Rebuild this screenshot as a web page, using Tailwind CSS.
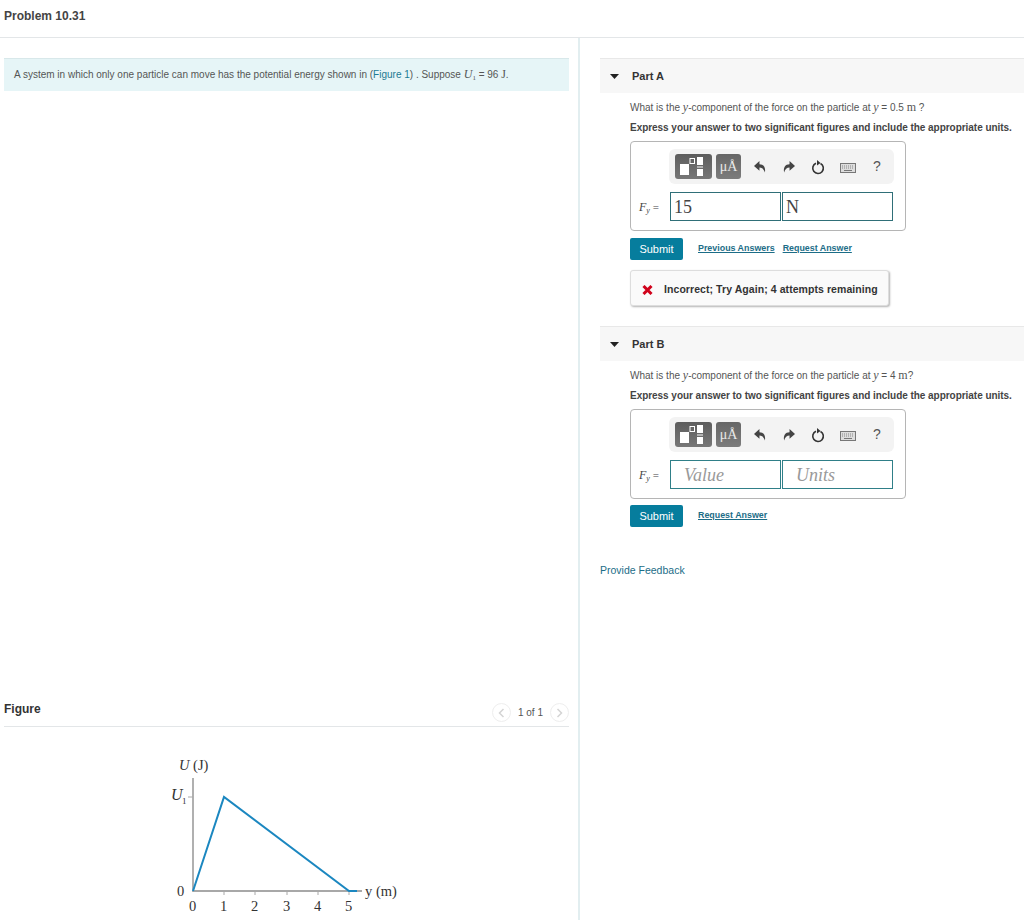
<!DOCTYPE html>
<html lang="en">

<head>
  <title>Problem 10.31</title>
  <meta charset="UTF-8">
  <script src="https://cdn.jsdelivr.net/npm/@tailwindcss/browser@4"></script>
</head>

<body class="bg-white font-['Liberation_Sans',Arial,sans-serif] text-[#333] overflow-hidden">
  <div class="h-[38px] border-b border-[#e3e6e8] pl-[4px] pt-[9px] text-[12px] leading-[15px] font-bold text-[#444]">Problem 10.31</div>

  <div class="flex h-[882px]">
    <!-- left: statement and figure -->
    <div class="w-[580px] shrink-0 border-r-2 border-[#e2eef0] pl-[4px] pr-[9px] pt-[20px]">
      <div class="h-[33px] bg-[#e6f5f7] border-t border-[#d8e8ea] pl-[10px] pb-[2px] flex items-center text-[10px] text-[#555]">
        <span>A system in which only one particle can move has the potential energy shown in (<span class="text-[#1c7a93]">Figure 1</span>) . Suppose <i class="font-['Liberation_Serif',serif] text-[12px]">U</i><sub class="font-['Liberation_Serif',serif] text-[7px]">1</sub> = 96 <span class="font-['Liberation_Serif',serif] text-[12px]">J</span>.</span>
      </div>

      <div class="mt-[609px] h-[27px] border-b border-[#e3e6e8] flex items-start justify-between">
        <span class="mt-[2px] text-[12px] leading-[15px] font-bold text-[#333]">Figure</span>
        <div class="flex items-center gap-[7px] mt-[3px] -ml-[2px] text-[10px] text-[#555]">
          <span class="w-[19px] h-[19px] rounded-full border border-[#eee] flex items-center justify-center">
            <svg width="7" height="10" viewBox="0 0 7 10" fill="none" stroke="#d4d4d4" stroke-width="1.5"><path d="M5.500 1 1.500 5l4 4" /></svg>
          </span>
          <span>1 of 1</span>
          <span class="w-[19px] h-[19px] rounded-full border border-[#eee] flex items-center justify-center">
            <svg width="7" height="10" viewBox="0 0 7 10" fill="none" stroke="#d4d4d4" stroke-width="1.5"><path d="M1.500 1l4 4-4 4" /></svg>
          </span>
        </div>
      </div>

      <svg class="block ml-[146px] mt-[23px]" width="260" height="170" viewBox="0 0 260 170" font-family="Liberation Serif, serif" font-size="14.5" fill="#333">
        <path d="M43 28V141H212" fill="none" stroke="#a8a8a8" stroke-width="1.800" />
        <path d="M38 47h5M74 141v4M105 141v4M137 141v4M168 141v4M199 141v4" fill="none" stroke="#a8a8a8" stroke-width="1" />
        <path d="M43 141 74 47 199 141H207" fill="none" stroke="#1b87c0" stroke-width="2" />
        <text x="29" y="20"><tspan font-style="italic">U</tspan> (J)</text>
        <text x="21" y="50" font-size="16" font-style="italic">U</text>
        <text x="32" y="54" font-size="9">1</text>
        <text x="27" y="146">0</text>
        <text x="215" y="146">y (m)</text>
        <text x="39" y="161">0</text>
        <text x="70" y="161">1</text>
        <text x="101" y="161">2</text>
        <text x="133" y="161">3</text>
        <text x="164" y="161">4</text>
        <text x="195" y="161">5</text>
      </svg>
    </div>

    <!-- right: parts -->
    <div class="flex-1 pl-[20px] pt-[20px]">
      <div class="h-[35px] bg-[#f7f7f7] border-t border-[#e8e8e8] flex items-center text-[11px] font-bold text-[#333]">
        <svg class="ml-[10px] mr-[13px]" width="9" height="5" viewBox="0 0 9 5"><path d="M0 0h9L4.500 5z" fill="#222" /></svg>
        Part A
      </div>
      <div class="pl-[30px]">
        <p class="mt-[8px] h-[13px] text-[10px] leading-[13px] text-[#555]">What is the <i class="font-['Liberation_Serif',serif] text-[12px]">y</i>-component of the force on the particle at <i class="font-['Liberation_Serif',serif] text-[12px]">y</i> = 0.5 <span class="font-['Liberation_Serif',serif] text-[12px]">m</span> ?</p>
        <p class="mt-[7px] h-[13px] text-[10px] leading-[13px] font-bold text-[#444] tracking-[-0.04px] whitespace-nowrap">Express your answer to two significant figures and include the appropriate units.</p>

        <div class="mt-[7px] w-[276px] h-[90px] border border-[#b5b5b5] rounded-[4px] pt-[7px] pl-[38px]">
          <div class="w-[225px] h-[35px] bg-[#f3f3f3] rounded-[6px] flex items-center pl-[6px]">
            <span class="w-[37px] h-[25px] rounded-[3px] bg-linear-to-b from-[#5d5d5d] to-[#777] flex items-center pl-[5px]">
              <svg width="24" height="20" viewBox="0 0 24 20" fill="#fff"><rect x="0" y="7" width="9" height="11" /><rect x="10" y="1.500" width="4.500" height="5" fill="none" stroke="#fff" stroke-width="1" /><rect x="17" y="0" width="6" height="8" /><rect x="17" y="9.500" width="6" height="1" /><rect x="17" y="12" width="6" height="7" /></svg>
            </span>
            <span class="ml-[4px] w-[25px] h-[25px] rounded-[3px] bg-linear-to-b from-[#666] to-[#7c7c7c] flex items-center justify-center text-white/85 text-[14px] font-['Liberation_Serif',serif]">μÅ</span>
            <svg class="ml-[13px]" width="12" height="12" viewBox="0 0 11 11" fill="#444"><path d="M5 0 0 4.500 5 9V6C7.500 6 9 7.500 10 10.500 10.800 6 9 3 5 3z" /></svg>
            <svg class="ml-[17px]" width="12" height="12" viewBox="0 0 11 11" fill="#444"><path d="M6 0 11 4.500 6 9V6C3.500 6 2 7.500 1 10.500 .2 6 2 3 6 3z" /></svg>
            <svg class="ml-[16px] mt-[2px]" width="14" height="15" viewBox="0 0 14 15" fill="none" stroke="#333" stroke-width="1.600"><path d="M9.500 3.500A5.300 5.300 0 1 1 5 3.300" /><path d="M6 0v5.500L9.500 3z" fill="#333" stroke="none" /></svg>
            <svg class="ml-[15px] mt-[3px]" width="16" height="10" viewBox="0 0 16 10"><rect x=".5" y=".5" width="15" height="9" fill="#ddd" stroke="#777" /><path d="M2 3h12M2 5h12" stroke="#888" stroke-dasharray="1 1" /><path d="M4 7.500h8" stroke="#777" /></svg>
            <span class="ml-[17px] text-[14px] text-[#555]">?</span>
          </div>
          <div class="flex items-center -ml-[30px] mt-[8px]">
            <span class="w-[30px] text-[11px] text-[#444] font-['Liberation_Serif',serif] whitespace-nowrap"><i class="text-[12px]">F</i><sub class="text-[8px] italic">y</sub> =</span>
            <span class="ml-[1px] w-[111px] h-[29px] border border-[#2f6f78] pl-[3px] text-[18px] leading-[29px] text-[#444] font-['Liberation_Serif',serif]">15</span>
            <span class="ml-[1px] w-[111px] h-[29px] border border-[#2f6f78] pl-[3px] text-[18px] leading-[29px] text-[#444] font-['Liberation_Serif',serif]">N</span>
          </div>
        </div>

        <div class="mt-[7px] flex items-center text-[8.9px]">
          <span class="w-[53px] h-[22px] bg-[#067d9d] rounded-[2px] text-white text-[11px] flex items-center justify-center">Submit</span>
          <a class="ml-[15px] font-bold text-[#1c6d87] underline">Previous Answers</a>
          <a class="ml-[8px] font-bold text-[#1c6d87] underline">Request Answer</a>
        </div>

        <div class="mt-[10px] w-[259px] h-[36px] bg-[#fafafa] border border-[#ddd] rounded-[3px] shadow-[1px_1px_2px_rgba(0,0,0,0.3)] flex items-center pl-[11px] pt-[3px] text-[10.5px] font-bold text-[#333] tracking-[0.07px] whitespace-nowrap">
          <svg width="11" height="10" viewBox="0 0 11 10"><path d="M1.500 1 9.500 9M9.500 1 1.500 9" stroke="#d0021b" stroke-width="3" /></svg>
          <span class="ml-[11px]">Incorrect; Try Again; 4 attempts remaining</span>
        </div>
      </div>

      <div class="mt-[20px] h-[35px] bg-[#f7f7f7] border-t border-[#e8e8e8] flex items-center text-[11px] font-bold text-[#333]">
        <svg class="ml-[10px] mr-[13px]" width="9" height="5" viewBox="0 0 9 5"><path d="M0 0h9L4.500 5z" fill="#222" /></svg>
        Part B
      </div>
      <div class="pl-[30px]">
        <p class="mt-[8px] h-[13px] text-[10px] leading-[13px] text-[#555]">What is the <i class="font-['Liberation_Serif',serif] text-[12px]">y</i>-component of the force on the particle at <i class="font-['Liberation_Serif',serif] text-[12px]">y</i> = 4 <span class="font-['Liberation_Serif',serif] text-[12px]">m</span>?</p>
        <p class="mt-[7px] h-[13px] text-[10px] leading-[13px] font-bold text-[#444] tracking-[-0.04px] whitespace-nowrap">Express your answer to two significant figures and include the appropriate units.</p>

        <div class="mt-[7px] w-[276px] h-[90px] border border-[#b5b5b5] rounded-[4px] pt-[7px] pl-[38px]">
          <div class="w-[225px] h-[35px] bg-[#f3f3f3] rounded-[6px] flex items-center pl-[6px]">
            <span class="w-[37px] h-[25px] rounded-[3px] bg-linear-to-b from-[#5d5d5d] to-[#777] flex items-center pl-[5px]">
              <svg width="24" height="20" viewBox="0 0 24 20" fill="#fff"><rect x="0" y="7" width="9" height="11" /><rect x="10" y="1.500" width="4.500" height="5" fill="none" stroke="#fff" stroke-width="1" /><rect x="17" y="0" width="6" height="8" /><rect x="17" y="9.500" width="6" height="1" /><rect x="17" y="12" width="6" height="7" /></svg>
            </span>
            <span class="ml-[4px] w-[25px] h-[25px] rounded-[3px] bg-linear-to-b from-[#666] to-[#7c7c7c] flex items-center justify-center text-white/85 text-[14px] font-['Liberation_Serif',serif]">μÅ</span>
            <svg class="ml-[13px]" width="12" height="12" viewBox="0 0 11 11" fill="#444"><path d="M5 0 0 4.500 5 9V6C7.500 6 9 7.500 10 10.500 10.800 6 9 3 5 3z" /></svg>
            <svg class="ml-[17px]" width="12" height="12" viewBox="0 0 11 11" fill="#444"><path d="M6 0 11 4.500 6 9V6C3.500 6 2 7.500 1 10.500 .2 6 2 3 6 3z" /></svg>
            <svg class="ml-[16px] mt-[2px]" width="14" height="15" viewBox="0 0 14 15" fill="none" stroke="#333" stroke-width="1.600"><path d="M9.500 3.500A5.300 5.300 0 1 1 5 3.300" /><path d="M6 0v5.500L9.500 3z" fill="#333" stroke="none" /></svg>
            <svg class="ml-[15px] mt-[3px]" width="16" height="10" viewBox="0 0 16 10"><rect x=".5" y=".5" width="15" height="9" fill="#ddd" stroke="#777" /><path d="M2 3h12M2 5h12" stroke="#888" stroke-dasharray="1 1" /><path d="M4 7.500h8" stroke="#777" /></svg>
            <span class="ml-[17px] text-[14px] text-[#555]">?</span>
          </div>
          <div class="flex items-center -ml-[30px] mt-[8px]">
            <span class="w-[30px] text-[11px] text-[#444] font-['Liberation_Serif',serif] whitespace-nowrap"><i class="text-[12px]">F</i><sub class="text-[8px] italic">y</sub> =</span>
            <span class="ml-[1px] w-[111px] h-[29px] border border-[#2f7f88] pl-[13px] text-[18px] leading-[29px] italic text-[#999] font-['Liberation_Serif',serif]">Value</span>
            <span class="ml-[1px] w-[111px] h-[29px] border border-[#2f7f88] pl-[13px] text-[18px] leading-[29px] italic text-[#999] font-['Liberation_Serif',serif]">Units</span>
          </div>
        </div>

        <div class="mt-[6px] flex items-center text-[8.9px]">
          <span class="w-[53px] h-[22px] bg-[#067d9d] rounded-[2px] text-white text-[11px] flex items-center justify-center">Submit</span>
          <a class="ml-[15px] font-bold text-[#1c6d87] underline">Request Answer</a>
        </div>
      </div>

      <a class="block mt-[37px] text-[10.5px] leading-[13px] text-[#1c6d87]">Provide Feedback</a>
    </div>
  </div>
</body>

</html>
